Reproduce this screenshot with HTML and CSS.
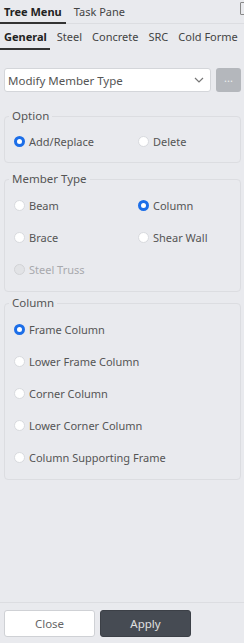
FILE: index.html
```html
<!DOCTYPE html>
<html>
<head>
<meta charset="utf-8">
<link rel="stylesheet" href="styles.css">
</head>
<body>
<div class="panel">
  <div class="tabs top">
    <div class="tab active">Tree Menu</div>
    <div class="tab">Task Pane</div>
    <div class="pin"></div>
  </div>
  <div class="tabs sub">
    <div class="tab active">General</div>
    <div class="tab">Steel</div>
    <div class="tab">Concrete</div>
    <div class="tab">SRC</div>
    <div class="tab">Cold Forme</div>
  </div>
  <div class="content">
    <div class="selrow">
      <div class="select">
        <span>Modify Member Type</span>
        <svg width="10" height="6" viewBox="0 0 10 6"><path d="M1 1l4 4 4-4" fill="none" stroke="#777" stroke-width="1.2"/></svg>
      </div>
      <div class="more">...</div>
    </div>
    <fieldset class="group option">
      <legend>Option</legend>
      <div class="grid two">
        <label class="radio checked"><i></i>Add/Replace</label>
        <label class="radio"><i></i>Delete</label>
      </div>
    </fieldset>
    <fieldset class="group member">
      <legend>Member Type</legend>
      <div class="grid two">
        <label class="radio"><i></i>Beam</label>
        <label class="radio checked"><i></i>Column</label>
        <label class="radio"><i></i>Brace</label>
        <label class="radio"><i></i>Shear Wall</label>
        <label class="radio disabled"><i></i>Steel Truss</label>
      </div>
    </fieldset>
    <fieldset class="group column">
      <legend>Column</legend>
      <div class="grid one">
        <label class="radio checked"><i></i>Frame Column</label>
        <label class="radio"><i></i>Lower Frame Column</label>
        <label class="radio"><i></i>Corner Column</label>
        <label class="radio"><i></i>Lower Corner Column</label>
        <label class="radio"><i></i>Column Supporting Frame</label>
      </div>
    </fieldset>
  </div>
  <div class="footer">
    <button class="btn close">Close</button>
    <button class="btn apply">Apply</button>
  </div>
</div>
</body>
</html>
```
FILE: styles.css
```css
* { box-sizing: border-box; }
html, body { margin: 0; padding: 0; }
body {
  background: #e9eaee;
  font-family: "Noto Sans", "Open Sans", sans-serif;
  font-size: 11px;
  color: #4a4a4a;
  width: 244px;
  height: 643px;
  overflow: hidden;
}
.panel { display: flex; flex-direction: column; height: 643px; }
.tabs { display: flex; position: relative; border-bottom: 1px solid #dcdde1; }
.tabs.top { height: 24px; align-items: center; padding-left: 4px; }
.tabs.top .tab { margin-right: 12px; line-height: 22px; color: #444; white-space: nowrap; }
.tabs.top .tab.active { font-weight: bold; color: #222; }
.tabs.top .tab.active::after {
  content: ""; position: absolute; left: 0; bottom: -1px; width: 66px; height: 2px; background: #333;
}
.pin {
  position: absolute; right: -3px; top: 2px; width: 7px; height: 13px;
  border: 1px solid #888; border-radius: 1px;
}
.tabs.sub { height: 25px; align-items: center; padding-left: 4px; border-bottom: none; }
.tabs.sub .tab { margin-right: 10px; white-space: nowrap; color: #444; }
.tabs.sub .tab.active { font-weight: bold; color: #222; }
.tabs.sub .tab.active::after {
  content: ""; position: absolute; left: 0; bottom: -1px; width: 50px; height: 2px; background: #333;
}
.content { flex: 1; padding: 19px 3px 0 4px; }
.selrow { display: flex; gap: 5px; height: 24px; margin-bottom: 17px; }
.select {
  flex: 1; background: #fff; border: 1px solid #d4d6da; border-radius: 3px;
  display: flex; align-items: center; justify-content: space-between; padding: 0 6px 0 3px;
  color: #555; font-size: 11.5px;
}
.more {
  width: 25px; background: #b4b7bc; border-radius: 3px; color: #eee;
  text-align: center; line-height: 20px; font-size: 11px;
}
fieldset.group {
  margin: 0; border: 1px solid #dcdde1; border-radius: 4px;
  padding: 3px 0 6px 9px;
}
fieldset.option { padding-top: 2px; padding-bottom: 5px; margin-bottom: 9px; }
fieldset.member { margin-bottom: 4px; }
legend { padding: 0 3px; margin-left: -5px; color: #555; line-height: 14px; font-size: 11.5px; }
.grid { display: grid; row-gap: 0; }
.grid.two { grid-template-columns: 124px 1fr; }
.grid.one { grid-template-columns: 1fr; }
.radio { display: flex; align-items: center; height: 32px; color: #555; white-space: nowrap; }
.radio i {
  display: inline-block; flex: none; width: 11px; height: 11px; border-radius: 50%;
  background: #fff; border: 1px solid #d8dade; margin-right: 4px;
}
.radio.checked i { border: 3px solid #1c6ee8; background: #fff; }
.radio.disabled { color: #a8a9ad; }
.radio.disabled i { background: #e2e3e6; border-color: #d2d3d6; }
.footer {
  border-top: 1px solid #dcdde1; padding: 7px 4px 6px; display: flex; gap: 5px;
}
.btn {
  width: 91px; height: 27px; border-radius: 3px; font-family: inherit; font-size: 11.5px;
}
.btn.close { background: #fff; border: 1px solid #cfd1d5; color: #666; }
.btn.apply { background: #464b53; border: 1px solid #3c4047; color: #e0e0e0; }
```
